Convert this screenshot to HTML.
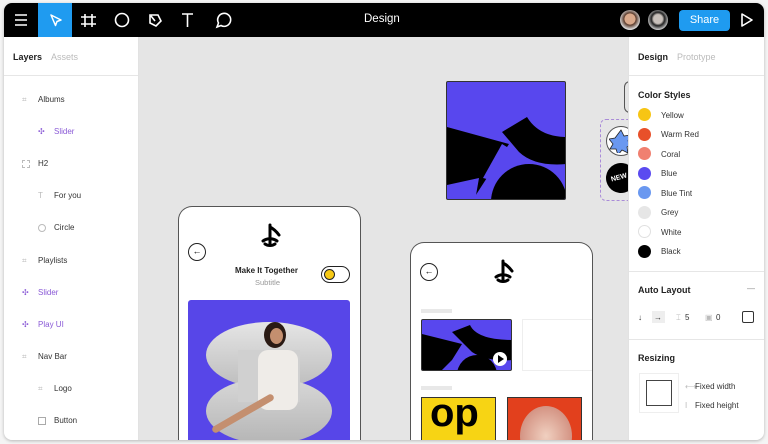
<!DOCTYPE html>
<html><head><meta charset="utf-8"><style>
*{margin:0;padding:0;box-sizing:border-box}
body{width:768px;height:444px;background:#f4f4f4;font-family:"Liberation Sans",sans-serif;position:relative;overflow:hidden}
.win{position:absolute;left:4px;top:3px;width:760px;height:437px;border-radius:8px;overflow:hidden;background:#e5e5e5;box-shadow:0 1px 3px rgba(0,0,0,.25)}
.top{position:absolute;left:0;top:0;width:760px;height:34px;background:#000}
.abs{position:absolute}
.lp{position:absolute;left:0;top:34px;width:135px;height:403px;background:#fff;border-right:1px solid #e2e2e2}
.rp{position:absolute;left:624px;top:34px;width:136px;height:403px;background:#fff;border-left:1px solid #e2e2e2}
.t{position:absolute;font-size:8px;color:#333;white-space:nowrap}
.p{color:#8a5ad6}
.sep{position:absolute;left:0;width:100%;height:1px;background:#e6e6e6}
.dot{position:absolute;width:13px;height:13px;border-radius:50%}
.phone{position:absolute;background:#fff;border:1.5px solid #555;border-bottom:none;border-radius:14px 14px 0 0;overflow:hidden}
</style></head><body>
<div class="win">
<div class="top">
 <svg class="abs" style="left:0;top:0" width="240" height="34">
  <g stroke="#fff" stroke-width="1.6" fill="none">
   <path d="M11 12h12M11 17h12M11 22h12"/>
  </g>
  <rect x="34" y="0" width="34" height="34" fill="#1f9bf0"/>
  <path d="M47 12l10 5-4 1.5-1.5 4z" stroke="#fff" stroke-width="1.5" fill="none" stroke-linejoin="round"/>
  <g stroke="#fff" stroke-width="1.6" fill="none">
   <path d="M81 11v13M88 11v13M77 14h15M77 21h15"/>
   <circle cx="118" cy="17" r="6.5"/>
   <path d="M146 12l8 0 3 6-5 5-6-3z M147 13l4 5"/>
   <path d="M178 11h11M183.5 11v13"/>
   <path d="M213 24l1.5-4a6.5 6.5 0 1 1 2.5 2.5z"/>
  </g>
 </svg>
 <div class="t" style="left:360px;top:10px;font-size:11.5px;color:#fff">Design</div>
 <div class="abs" style="left:616px;top:7px;width:20px;height:20px;border-radius:50%;background:radial-gradient(circle at 50% 45%,#d9a98b 35%,#5a3b2c 40%,#ddd 70%)"></div>
 <div class="abs" style="left:644px;top:7px;width:20px;height:20px;border-radius:50%;background:radial-gradient(circle at 50% 45%,#c9c1bb 30%,#222 45%,#ccc 72%)"></div>
 <div class="abs" style="left:675px;top:7px;width:51px;height:21px;border-radius:4px;background:#1f9bf0;color:#fff;font-size:11px;text-align:center;line-height:21px">Share</div>
 <svg class="abs" style="left:736px;top:10px" width="14" height="14"><path d="M2 1l10 6-10 6z" stroke="#fff" stroke-width="1.6" fill="none" stroke-linejoin="round"/></svg>
</div>

<div class="lp">
 <div class="t" style="left:9px;top:15px;font-size:9px;font-weight:bold;color:#222">Layers</div>
 <div class="t" style="left:47px;top:15px;font-size:9px;color:#bbb">Assets</div>
 <div class="sep" style="top:38px"></div>
 <div class="t" style="left:18px;top:58px;color:#bbb">⌗</div><div class="t" style="left:34px;top:58px">Albums</div>
 <div class="t p" style="left:34px;top:90px">✣</div><div class="t p" style="left:50px;top:90px">Slider</div>
 <div class="abs" style="left:18px;top:123px;width:8px;height:8px;border:1px dashed #bbb"></div><div class="t" style="left:34px;top:122px">H2</div>
 <div class="t" style="left:34px;top:154px;color:#bbb">T</div><div class="t" style="left:50px;top:154px">For you</div>
 <div class="abs" style="left:34px;top:187px;width:8px;height:8px;border:1px solid #bbb;border-radius:50%"></div><div class="t" style="left:50px;top:186px">Circle</div>
 <div class="t" style="left:18px;top:219px;color:#bbb">⌗</div><div class="t" style="left:34px;top:219px">Playlists</div>
 <div class="t p" style="left:18px;top:251px">✣</div><div class="t p" style="left:34px;top:251px">Slider</div>
 <div class="t p" style="left:18px;top:283px">✣</div><div class="t p" style="left:34px;top:283px">Play UI</div>
 <div class="t" style="left:18px;top:315px;color:#bbb">⌗</div><div class="t" style="left:34px;top:315px">Nav Bar</div>
 <div class="t" style="left:34px;top:347px;color:#bbb">⌗</div><div class="t" style="left:50px;top:347px">Logo</div>
 <div class="abs" style="left:34px;top:380px;width:8px;height:8px;border:1px solid #aaa"></div><div class="t" style="left:50px;top:379px">Button</div>
</div>

<div class="abs" style="left:442px;top:78px;width:120px;height:119px;border-radius:2px;background:#5847ee;overflow:hidden;border:1px solid #333">
 <svg width="120" height="119" viewBox="0 0 120 119">
  <path d="M0 45 L62 62 L45 88 L25 119 L0 119z" fill="#000"/>
  <path d="M55 50 L80 35 Q92 55 120 55 L120 82 Q88 85 72 70z" fill="#000"/>
  <path d="M36 96 L55 62 L85 80 L70 105z" fill="#5847ee"/>
  <circle cx="82" cy="120" r="38" fill="#000"/>
  <path d="M0 103 L32 96 L28 119 L0 119z" fill="#5847ee"/>
 </svg>
</div>
<div class="abs" style="left:620px;top:78px;width:10px;height:32px;border:1.5px solid #555;border-right:none;border-radius:6px 0 0 6px"></div>
<div class="abs" style="left:596px;top:116px;width:40px;height:82px;border:1.5px dashed #a98bd8;border-radius:6px"></div>
<div class="abs" style="left:602px;top:123px;width:30px;height:30px;border-radius:50%;background:#fff;border:1.5px solid #555"></div>
<svg class="abs" style="left:605px;top:126px" width="24" height="24"><path d="M12 1l3 6 6-1-2 6 5 3-6 3 1 6-6-3-4 5-2-6-6 0 3-5-4-5 6-1z" fill="#6a98f0" stroke="#222" stroke-width=".8"/></svg>
<div class="abs" style="left:602px;top:160px;width:30px;height:30px;border-radius:50%;background:#000;color:#fff;font-size:7px;font-weight:bold;line-height:30px;padding-left:5px;transform:rotate(-15deg)">NEW</div>

<div class="phone" style="left:174px;top:203px;width:183px;height:234px">
 <div class="abs" style="left:9px;top:36px;width:18px;height:18px;border:1.5px solid #222;border-radius:50%;font-size:9px;text-align:center;line-height:15px">←</div>
 <svg class="abs" style="left:82px;top:16px" width="20" height="26"><path d="M9 2v20M9 4c4 2 6 4 9 8M2 18c4-3 10-3 14 0M4 21c3 2 7 2 10 0" stroke="#000" stroke-width="3" fill="none" stroke-linecap="round"/></svg>
 <div class="t" style="left:56px;top:59px;font-size:8px;font-weight:bold;color:#222">Make It Together</div>
 <div class="t" style="left:76px;top:71px;font-size:7.5px;color:#999">Subtitle</div>
 <div class="abs" style="left:142px;top:59px;width:29px;height:17px;border:1.5px solid #222;border-radius:9px"><div style="position:absolute;left:2px;top:2px;width:11px;height:11px;border-radius:50%;background:#f7c914;border:1px solid #222"></div></div>
 <div class="abs" style="left:9px;top:93px;width:162px;height:150px;background:#5746e8;border-radius:3px;overflow:hidden">
  <div class="abs" style="left:18px;top:22px;width:126px;height:66px;border-radius:50%;background:linear-gradient(#e5e5e5,#bdbdbd)"></div>
  <div class="abs" style="left:18px;top:78px;width:126px;height:66px;border-radius:50%;background:linear-gradient(#d8d8d8,#b5b5b5)"></div>
  <div class="abs" style="left:50px;top:50px;width:62px;height:52px;background:#d0d0d0"></div>
  <div class="abs" style="left:76px;top:22px;width:22px;height:26px;border-radius:50%;background:#2a1a14"></div>
  <div class="abs" style="left:82px;top:28px;width:13px;height:16px;border-radius:50%;background:#c48f6f"></div>
  <div class="abs" style="left:70px;top:50px;width:40px;height:60px;border-radius:10px;background:#efece8"></div>
  <div class="abs" style="left:20px;top:110px;width:70px;height:7px;background:#c48f6f;transform:rotate(-30deg);border-radius:4px"></div>
 </div>
</div>

<div class="phone" style="left:406px;top:239px;width:183px;height:198px">
 <div class="abs" style="left:9px;top:20px;width:18px;height:18px;border:1.5px solid #222;border-radius:50%;font-size:9px;text-align:center;line-height:15px">←</div>
 <svg class="abs" style="left:83px;top:16px" width="20" height="26"><path d="M9 2v20M9 4c4 2 6 4 9 8M2 18c4-3 10-3 14 0M4 21c3 2 7 2 10 0" stroke="#000" stroke-width="3" fill="none" stroke-linecap="round"/></svg>
 <div class="abs" style="left:10px;top:66px;width:31px;height:4px;background:#e8e8e8"></div>
 <div class="abs" style="left:10px;top:76px;width:91px;height:52px;background:#5847ee;border:1px solid #333;border-radius:2px;overflow:hidden">
  <svg width="91" height="52"><path d="M0 14 L40 24 L30 40 L18 52 L0 52z" fill="#000"/><path d="M30 12 L48 5 Q55 20 91 20 L91 40 Q65 42 50 32z" fill="#000"/><circle cx="55" cy="55" r="20" fill="#000"/><circle cx="78" cy="39" r="7" fill="#fff"/><path d="M76 35v8l6-4z" fill="#000"/></svg>
 </div>
 <div class="abs" style="left:111px;top:76px;width:72px;height:52px;border:1px solid #eee"></div>
 <div class="abs" style="left:10px;top:143px;width:31px;height:4px;background:#e8e8e8"></div>
 <div class="abs" style="left:10px;top:154px;width:75px;height:60px;background:#f7d414;border:1px solid #333;overflow:hidden;font-size:40px;font-weight:bold;line-height:30px;color:#000;padding-left:8px">op</div>
 <div class="abs" style="left:96px;top:154px;width:75px;height:60px;background:#e2401d;border:1px solid #333;overflow:hidden"><div style="position:absolute;left:12px;top:8px;width:52px;height:60px;border-radius:50%;background:radial-gradient(#f0d0c0,#c87a6a)"></div></div>
</div>

<div class="rp">
 <div class="t" style="left:9px;top:15px;font-size:9px;font-weight:bold;color:#222">Design</div>
 <div class="t" style="left:48px;top:15px;font-size:9px;color:#bbb">Prototype</div>
 <div class="sep" style="top:38px"></div>
 <div class="t" style="left:9px;top:53px;font-size:9px;font-weight:bold;color:#222">Color Styles</div>
 <div class="dot" style="left:9px;top:71px;background:#f7c514"></div><div class="t" style="left:32px;top:74px">Yellow</div>
 <div class="dot" style="left:9px;top:91px;background:#e8502a"></div><div class="t" style="left:32px;top:93px">Warm Red</div>
 <div class="dot" style="left:9px;top:110px;background:#f08070"></div><div class="t" style="left:32px;top:113px">Coral</div>
 <div class="dot" style="left:9px;top:130px;background:#5b4bf0"></div><div class="t" style="left:32px;top:132px">Blue</div>
 <div class="dot" style="left:9px;top:149px;background:#6a98f0"></div><div class="t" style="left:32px;top:152px">Blue Tint</div>
 <div class="dot" style="left:9px;top:169px;background:#e6e6e6"></div><div class="t" style="left:32px;top:171px">Grey</div>
 <div class="dot" style="left:9px;top:188px;background:#fff;border:1px solid #e0e0e0"></div><div class="t" style="left:32px;top:191px">White</div>
 <div class="dot" style="left:9px;top:208px;background:#000"></div><div class="t" style="left:32px;top:210px">Black</div>
 <div class="sep" style="top:234px"></div>
 <div class="t" style="left:9px;top:248px;font-size:9px;font-weight:bold;color:#222">Auto Layout</div>
 <div class="t" style="left:118px;top:247px;color:#888">—</div>
 <div class="t" style="left:9px;top:276px">↓</div>
 <div class="abs" style="left:23px;top:274px;width:13px;height:12px;background:#eee"></div><div class="t" style="left:25px;top:276px">→</div>
 <div class="t" style="left:47px;top:276px;color:#bbb">⌶</div><div class="t" style="left:56px;top:276px">5</div>
 <div class="t" style="left:76px;top:276px;color:#bbb">▣</div><div class="t" style="left:87px;top:276px">0</div>
 <div class="abs" style="left:113px;top:274px;width:12px;height:12px;border:1.5px solid #333;border-radius:2px"></div>
 <div class="sep" style="top:302px"></div>
 <div class="t" style="left:9px;top:316px;font-size:9px;font-weight:bold;color:#222">Resizing</div>
 <div class="abs" style="left:10px;top:336px;width:40px;height:40px;border:1px solid #eee"><div style="position:absolute;left:6px;top:6px;width:26px;height:26px;border:1.5px solid #444"></div></div>
 <div class="t" style="left:56px;top:345px;color:#bbb">⟷</div><div class="t" style="left:66px;top:345px">Fixed width</div>
 <div class="t" style="left:56px;top:364px;color:#bbb">I</div><div class="t" style="left:66px;top:364px">Fixed height</div>
</div>
</div>
</body></html>
